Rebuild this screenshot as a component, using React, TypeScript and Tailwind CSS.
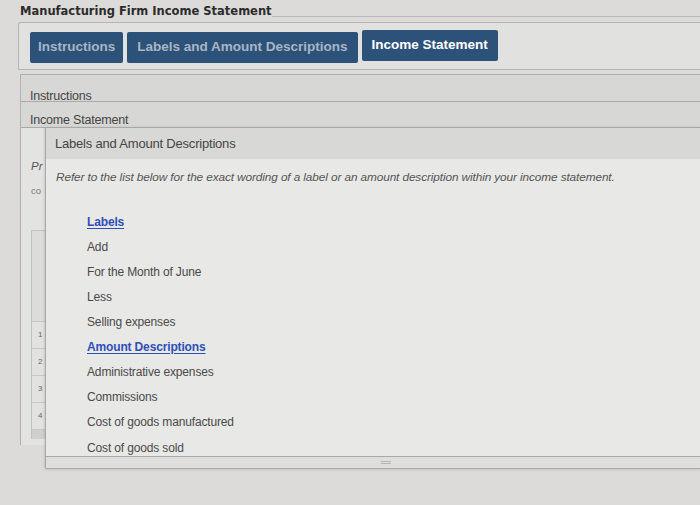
import React from 'react';

const labels = ['Add', 'For the Month of June', 'Less', 'Selling expenses'];
const amounts = ['Administrative expenses', 'Commissions', 'Cost of goods manufactured', 'Cost of goods sold'];

function Tab({ label, active, tight }: { label: string; active?: boolean; tight?: boolean }) {
  return (
    <div
      className={`h-[31px] flex items-center bg-[#2d5279] rounded-[2px] text-[13.5px] font-bold ${tight ? 'px-[8px]' : 'px-[10px]'} ${
        active ? 'text-white -mt-[2px]' : 'text-[#a7b6c6]'
      }`}
    >
      {label}
    </div>
  );
}

export default function App() {
  return (
    <div className="relative w-[700px] h-[505px] overflow-hidden bg-[#dcdbd9] font-['Liberation_Sans',Arial,sans-serif]">
      {/* Title */}
      <div className="h-[22px] flex items-start">
        <h1 className="pl-[20px] pt-[3px] text-[11.5px] font-bold text-[#2b2b2b] font-['DejaVu_Sans',sans-serif] whitespace-nowrap">
          Manufacturing Firm Income Statement
        </h1>
        <div className="flex-1 mt-[16px] border-t border-[#b9b9b7]" />
      </div>

      {/* Tab bar */}
      <div className="ml-[18px] h-[48px] border border-r-0 border-[#b5b5b3] rounded-tl-[3px] bg-[#e1e1df] pl-[11px] pt-[9px] flex items-start gap-[4px]">
        <Tab label="Instructions" tight />
        <Tab label="Labels and Amount Descriptions" />
        <Tab label="Income Statement" active />
      </div>

      {/* Underlying panel */}
      <div className="ml-[20px] mt-[4px] border-l border-t border-[#b0b0ae] bg-[#e3e3e1] h-[371px]">
        <div className="h-[27px] flex items-center pl-[9px] pt-[16px] text-[12.5px] text-[#454545] bg-[#d7d7d5] border-b border-[#a9a9a7] tracking-[-0.2px]">
          Instructions
        </div>
        <div className="h-[26px] flex items-center pl-[9px] pt-[12px] text-[12.5px] text-[#454545] bg-[#d7d7d5] border-b border-[#a9a9a7] tracking-[-0.2px]">
          Income Statement
        </div>
        <div className="pl-[10px] pt-[31px]">
          <div className="h-[14px] leading-[14px] text-[11.5px] italic text-[#555]">Pr</div>
          <div className="mt-[11px] h-[14px] leading-[14px] text-[9.5px] text-[#777]">co</div>
          <div className="mt-[32px] w-[40px] border-l border-t border-[#c2c2c0] bg-[#dcdcda]">
            <div className="h-[91px] border-b border-[#c8c8c6]" />
            {['1', '2', '3', '4'].map((n) => (
              <div key={n} className="h-[27px] flex items-center pl-[6px] text-[8px] text-[#666] border-b border-[#c8c8c6] bg-[#e2e2e0]">
                {n}
              </div>
            ))}
            <div className="h-[9px] bg-[#cfcfcd]" />
          </div>
        </div>
      </div>

      {/* Overlay panel */}
      <div className="absolute left-[45px] top-[127px] right-0 h-[341px] border-l border-t border-[#a8a8a6] bg-[#e8e8e6] shadow-[0_1px_3px_rgba(0,0,0,0.2)] flex flex-col">
        <div className="h-[31px] shrink-0 flex items-center pl-[9px] text-[13px] text-[#454545] bg-[#d8d8d6] tracking-[-0.2px]">
          Labels and Amount Descriptions
        </div>
        <div className="h-[297px] overflow-hidden shrink-0">
          <p className="pl-[10px] pt-[11px] h-[25px] leading-[14px] text-[11.8px] italic text-[#555] tracking-[-0.1px] whitespace-nowrap">
            Refer to the list below for the exact wording of a label or an amount description within your income statement.
          </p>
          <ul className="mt-[25px] pl-[41px] text-[12px] text-[#4a4a4a] tracking-[-0.15px]">
            <li className="h-[25px] flex items-center font-bold text-[#2e4fb8] underline underline-offset-2">Labels</li>
            {labels.map((l) => (
              <li key={l} className="h-[25px] flex items-center">{l}</li>
            ))}
            <li className="h-[25px] flex items-center font-bold text-[#2e4fb8] underline underline-offset-2">Amount Descriptions</li>
            {amounts.map((l, i) => (
              <li key={l} className={`h-[25px] flex items-center ${i === amounts.length - 1 ? 'pt-[3px]' : ''}`}>{l}</li>
            ))}
          </ul>
        </div>
        <div className="h-[13px] shrink-0 border-t border-b border-[#a9a9a7] bg-[#dededc] flex items-center pl-[335px]">
          <div className="w-[10px] flex flex-col gap-[1px]">
            <div className="h-px bg-[#b5b5b3]" />
            <div className="h-px bg-[#b5b5b3]" />
          </div>
        </div>
      </div>
    </div>
  );
}
